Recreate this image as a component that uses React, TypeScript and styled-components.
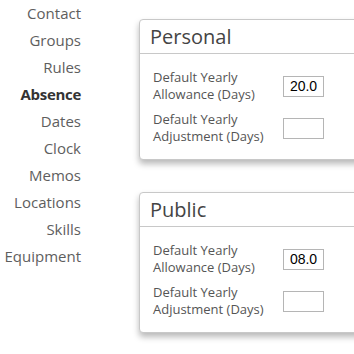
import React from "react";
import styled, { createGlobalStyle } from "styled-components";

const GlobalStyle = createGlobalStyle`
  html, body {
    margin: 0;
    padding: 0;
    background: #fff;
    overflow: hidden;
  }
  body {
    font-family: "Open Sans", "Liberation Sans", sans-serif;
  }
`;

const Page = styled.div`
  display: flex;
  align-items: flex-start;
  width: 354px;
  height: 354px;
  overflow: hidden;
`;

const SideNav = styled.ul`
  list-style: none;
  margin: 0;
  padding: 0;
  width: 81px;
  flex-shrink: 0;
  text-align: right;
`;

const NavItem = styled.li<{ $active?: boolean }>`
  font-size: 15px;
  line-height: 27px;
  white-space: nowrap;
  color: ${(p) => (p.$active ? "#333" : "#5e5e5e")};
  font-weight: ${(p) => (p.$active ? 700 : 400)};
  letter-spacing: ${(p) => (p.$active ? "-0.3px" : "0")};
`;

const Main = styled.div`
  display: flex;
  flex-direction: column;
  gap: 32px;
  margin: 19px 0 0 58px;
  flex-shrink: 0;
`;

const Panel = styled.section`
  width: 240px;
  border: 1px solid #c8c8c8;
  border-radius: 4px;
  background: #fff;
  box-shadow: 0 4px 6px rgba(0, 0, 0, 0.28);
`;

const PanelHeader = styled.h3`
  margin: 0;
  height: 33px;
  line-height: 33px;
  padding-left: 10px;
  font-size: 20px;
  font-weight: 400;
  color: #444;
  border-bottom: 1px solid #c8c8c8;
`;

const PanelBody = styled.div`
  display: flex;
  flex-direction: column;
  gap: 8px;
  padding: 15px 0 14px 13px;
`;

const Field = styled.div`
  display: flex;
  align-items: center;
`;

const Label = styled.label`
  width: 130px;
  font-size: 13px;
  line-height: 17px;
  color: #555;
`;

const NumberInput = styled.input`
  box-sizing: border-box;
  width: 41px;
  height: 21px;
  border: 1px solid #b5b5b5;
  padding: 0 2px;
  font-family: "Liberation Sans", Arial, sans-serif;
  font-size: 14px;
  color: #000;
  text-align: center;
  outline: none;
`;

const navItems = [
  "Contact",
  "Groups",
  "Rules",
  "Absence",
  "Dates",
  "Clock",
  "Memos",
  "Locations",
  "Skills",
  "Equipment",
];

const panels = [
  { title: "Personal", allowance: "20.0" },
  { title: "Public", allowance: "08.0" },
];

const App = () => {
  return (
    <>
      <GlobalStyle />
      <Page>
        <SideNav>
          {navItems.map((item) => (
            <NavItem key={item} $active={item === "Absence"}>
              {item}
            </NavItem>
          ))}
        </SideNav>
        <Main>
          {panels.map((p) => (
            <Panel key={p.title}>
              <PanelHeader>{p.title}</PanelHeader>
              <PanelBody>
                <Field>
                  <Label>
                    Default Yearly
                    <br />
                    Allowance (Days)
                  </Label>
                  <NumberInput defaultValue={p.allowance} />
                </Field>
                <Field>
                  <Label>
                    Default Yearly
                    <br />
                    Adjustment (Days)
                  </Label>
                  <NumberInput defaultValue="" />
                </Field>
              </PanelBody>
            </Panel>
          ))}
        </Main>
      </Page>
    </>
  );
};

export default App;
